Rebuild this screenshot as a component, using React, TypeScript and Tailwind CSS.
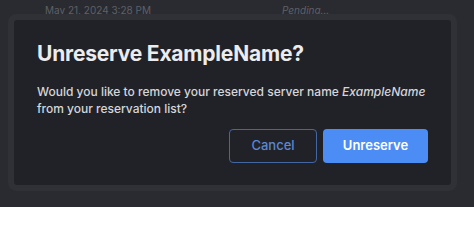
export default function App() {
  return (
    <div
      className="w-[474px] h-[207px] overflow-hidden bg-[#2a2b30] flex flex-col"
      style={{ fontFamily: "Inter, 'Open Sans', sans-serif" }}
    >
      {/* list row behind the backdrop */}
      <div className="h-[20px] flex items-center text-[10px] text-[#5d6069] leading-none">
        <span className="ml-[45px] w-[237px]">May 21, 2024 3:28 PM</span>
        <span className="italic">Pending...</span>
      </div>

      {/* dialog */}
      <div className="ml-[14px] w-[437px] h-[165px] bg-[#212228] rounded-[3px] shadow-[0_0_0_6px_#303137] pl-[23px] pr-[23px] pt-[20px] flex flex-col">
        <h2 className="text-[21px] leading-[28px] font-bold text-[#ececee] tracking-[-0.2px]">
          Unreserve ExampleName?
        </h2>
        <p className="mt-[15px] text-[12px] leading-[17px] font-medium text-[#d5d6da] whitespace-nowrap">
          Would you like to remove your reserved server name <em>ExampleName</em>
          <br />
          from your reservation list?
        </p>
        <div className="mt-[12px] flex justify-end gap-[6px]">
          <button className="w-[88px] h-[34px] rounded-[4px] border border-[#4467a3] text-[#5b87d3] text-[13px] font-medium">
            Cancel
          </button>
          <button className="w-[105px] h-[34px] rounded-[4px] bg-[#4c8cf5] text-white text-[13px] font-semibold">
            Unreserve
          </button>
        </div>
      </div>
    </div>
  );
}
